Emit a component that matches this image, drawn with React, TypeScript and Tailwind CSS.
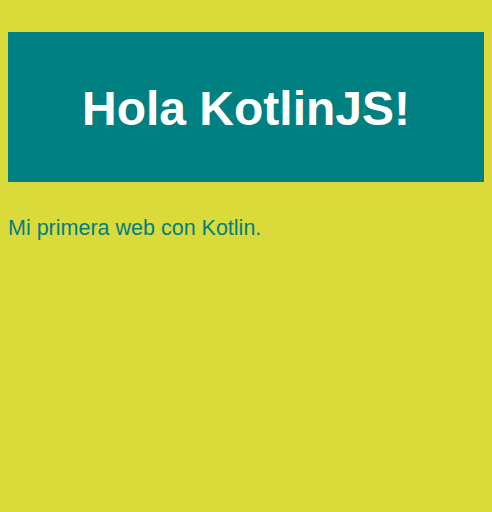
import React from "react"

export default function App() {
  return (
    <div
      className="min-h-screen w-full bg-[#dada3b] px-2 pt-8"
      style={{ fontFamily: '"Liberation Sans", Arial, sans-serif' }}
    >
      {/* Header banner */}
      <h1 className="flex h-[150px] items-center justify-center bg-[#008080] pt-[3px] text-[48px] font-bold text-white">
        Hola KotlinJS!
      </h1>

      <p className="mt-[34px] text-[21.5px] leading-[25px] text-[#008080]">
        Mi primera web con Kotlin.
      </p>
    </div>
  )
}
